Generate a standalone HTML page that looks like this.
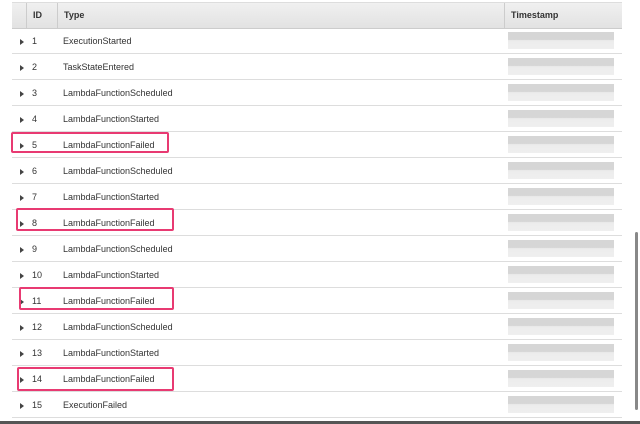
<!DOCTYPE html>
<html><head><style>
body{margin:0;width:640px;height:424px;background:#fff;position:relative;overflow:hidden;font-family:"Liberation Sans",sans-serif;font-size:9px;color:#333}
.hdr{position:absolute;left:12px;top:2px;width:610px;height:25px;background:linear-gradient(#f0f0f0,#e2e2e2);border-bottom:1px solid #ccc;border-top:1px solid #ddd}
.hdr div{position:absolute;top:0;height:25px;line-height:25px;font-weight:bold;font-size:9px;color:#333;border-left:1px solid #ccc;padding-left:6px}
.row{position:absolute;left:12px;width:610px;height:25px;border-bottom:1px solid #ddd}
.row span{position:absolute;top:1px;line-height:25px}
.tri{position:absolute;left:8px;top:11px;width:0;height:0;border-left:4px solid #444;border-top:3px solid transparent;border-bottom:3px solid transparent}
.ts{position:absolute;left:496px;top:4px;width:106px;height:17px;background:linear-gradient(#d6d6d6 0,#d6d6d6 45%,#ececec 50%,#efefef 100%)}
.box{position:absolute;border:2px solid #e83a72;border-radius:2px}
</style></head><body>
<div class="hdr"><div style="left:14px;width:25px">ID</div><div style="left:45px;width:440px">Type</div><div style="left:492px;width:112px">Timestamp</div></div>
<div class="row" style="top:28px"><i class="tri"></i><span style="left:20px">1</span><span style="left:51px">ExecutionStarted</span><i class="ts"></i></div>
<div class="row" style="top:54px"><i class="tri"></i><span style="left:20px">2</span><span style="left:51px">TaskStateEntered</span><i class="ts"></i></div>
<div class="row" style="top:80px"><i class="tri"></i><span style="left:20px">3</span><span style="left:51px">LambdaFunctionScheduled</span><i class="ts"></i></div>
<div class="row" style="top:106px"><i class="tri"></i><span style="left:20px">4</span><span style="left:51px">LambdaFunctionStarted</span><i class="ts"></i></div>
<div class="row" style="top:132px"><i class="tri"></i><span style="left:20px">5</span><span style="left:51px">LambdaFunctionFailed</span><i class="ts"></i></div>
<div class="row" style="top:158px"><i class="tri"></i><span style="left:20px">6</span><span style="left:51px">LambdaFunctionScheduled</span><i class="ts"></i></div>
<div class="row" style="top:184px"><i class="tri"></i><span style="left:20px">7</span><span style="left:51px">LambdaFunctionStarted</span><i class="ts"></i></div>
<div class="row" style="top:210px"><i class="tri"></i><span style="left:20px">8</span><span style="left:51px">LambdaFunctionFailed</span><i class="ts"></i></div>
<div class="row" style="top:236px"><i class="tri"></i><span style="left:20px">9</span><span style="left:51px">LambdaFunctionScheduled</span><i class="ts"></i></div>
<div class="row" style="top:262px"><i class="tri"></i><span style="left:20px">10</span><span style="left:51px">LambdaFunctionStarted</span><i class="ts"></i></div>
<div class="row" style="top:288px"><i class="tri"></i><span style="left:20px">11</span><span style="left:51px">LambdaFunctionFailed</span><i class="ts"></i></div>
<div class="row" style="top:314px"><i class="tri"></i><span style="left:20px">12</span><span style="left:51px">LambdaFunctionScheduled</span><i class="ts"></i></div>
<div class="row" style="top:340px"><i class="tri"></i><span style="left:20px">13</span><span style="left:51px">LambdaFunctionStarted</span><i class="ts"></i></div>
<div class="row" style="top:366px"><i class="tri"></i><span style="left:20px">14</span><span style="left:51px">LambdaFunctionFailed</span><i class="ts"></i></div>
<div class="row" style="top:392px"><i class="tri"></i><span style="left:20px">15</span><span style="left:51px">ExecutionFailed</span><i class="ts"></i></div>
<div class="box" style="left:11px;top:132px;width:154px;height:17px"></div>
<div class="box" style="left:16px;top:208px;width:154px;height:19px"></div>
<div class="box" style="left:19px;top:287px;width:151px;height:19px"></div>
<div class="box" style="left:17px;top:367px;width:153px;height:20px"></div>
<div style="position:absolute;left:635px;top:232px;width:3px;height:178px;background:#888;border-radius:2px"></div>
<div style="position:absolute;left:0;top:421px;width:640px;height:3px;background:#555"></div>
</body></html>
